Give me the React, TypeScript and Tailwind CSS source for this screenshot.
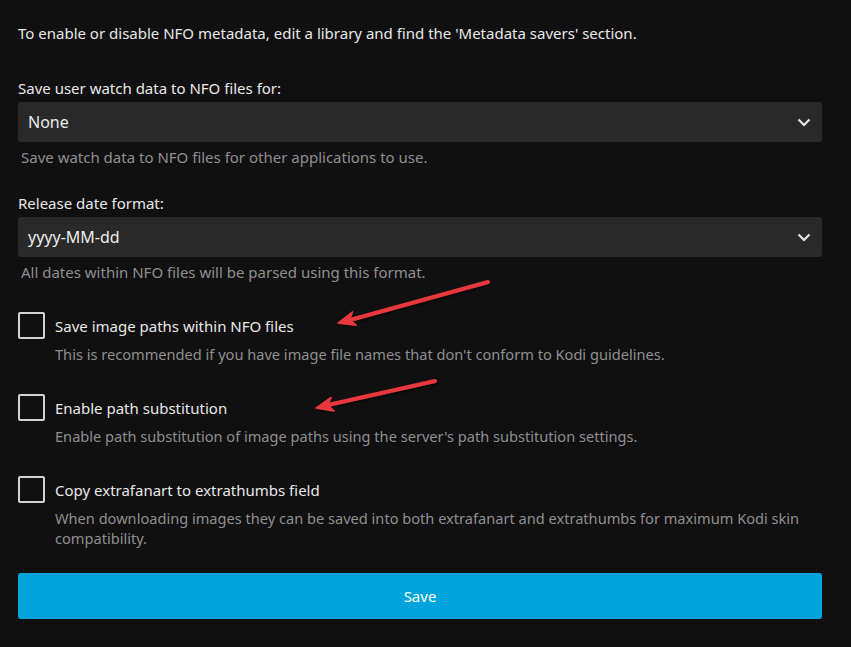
import { ReactNode } from "react";

const FONT = { fontFamily: '"Noto Sans", "Open Sans", sans-serif' };

function Chevron() {
  return (
    <svg width="14" height="9" viewBox="0 0 14 9" className="shrink-0">
      <path d="M1.5 1.5 L7 7 L12.5 1.5" fill="none" stroke="#e6e6e6" strokeWidth="2.2" />
    </svg>
  );
}

function SelectField({ label, value, help }: { label: string; value: string; help: string }) {
  return (
    <div>
      <label className="block text-[15px] leading-[20px] text-[#e8e8e8]">{label}</label>
      <div className="mt-[4px] flex h-[40px] items-center justify-between rounded-[3px] bg-[#292929] pl-[10px] pr-[11px]">
        <span className="text-[16px] text-[#ececec]">{value}</span>
        <Chevron />
      </div>
      <p className="mt-[5px] pl-[3px] text-[15px] leading-[20px] text-[#8f8f8f]">{help}</p>
    </div>
  );
}

function CheckField({ label, children }: { label: string; children: ReactNode }) {
  return (
    <div>
      <div className="flex items-center gap-[10px]">
        <span className="h-[27px] w-[27px] shrink-0 rounded-[2px] border-2 border-[#d2d2d2]" />
        <span className="text-[15px] leading-[20px] text-[#e8e8e8]">{label}</span>
      </div>
      <p className="mt-[5px] pl-[37px] pr-[4px] text-[14.6px] leading-[20px] text-[#8f8f8f]">{children}</p>
    </div>
  );
}

function Arrows() {
  return (
    <svg className="pointer-events-none absolute left-0 top-0" width="851" height="647" viewBox="0 0 851 647">
      <defs>
        <filter id="sh" x="-20%" y="-50%" width="140%" height="200%">
          <feDropShadow dx="1" dy="1.5" stdDeviation="1.2" floodColor="#000" floodOpacity="0.7" />
        </filter>
      </defs>
      <g filter="url(#sh)" fill="#e8393d" stroke="#e8393d">
        <line x1="488" y1="282" x2="350" y2="320" strokeWidth="4" strokeLinecap="round" />
        <polygon points="338,323 352.6,311.8 349.6,319.8 356.3,325.3" strokeWidth="1.5" strokeLinejoin="round" />
        <line x1="435" y1="381" x2="328" y2="405" strokeWidth="4" strokeLinecap="round" />
        <polygon points="316,408 331,397.4 327.7,405.3 334.1,411" strokeWidth="1.5" strokeLinejoin="round" />
      </g>
    </svg>
  );
}

export default function App() {
  return (
    <div className="relative h-[647px] w-[851px] overflow-hidden bg-[#101010]" style={FONT}>
      <div className="w-[822px] pl-[18px] pt-[23px]">
        <p className="text-[15px] leading-[20px] text-[#e8e8e8]">
          To enable or disable NFO metadata, edit a library and find the 'Metadata savers' section.
        </p>

        <div className="mt-[35px]">
          <SelectField
            label="Save user watch data to NFO files for:"
            value="None"
            help="Save watch data to NFO files for other applications to use."
          />
        </div>

        <div className="mt-[26px]">
          <SelectField
            label="Release date format:"
            value="yyyy-MM-dd"
            help="All dates within NFO files will be parsed using this format."
          />
        </div>

        <div className="mt-[30px] flex flex-col gap-[30px]">
          <CheckField label="Save image paths within NFO files">
            This is recommended if you have image file names that don't conform to Kodi guidelines.
          </CheckField>
          <CheckField label="Enable path substitution">
            Enable path substitution of image paths using the server's path substitution settings.
          </CheckField>
          <CheckField label="Copy extrafanart to extrathumbs field">
            When downloading images they can be saved into both extrafanart and extrathumbs for maximum Kodi skin
            compatibility.
          </CheckField>
        </div>

        <button
          type="button"
          className="mt-[25px] flex h-[46px] w-full items-center justify-center rounded-[3px] bg-[#00a4dc] text-[15px] text-white"
        >
          Save
        </button>
      </div>
      <Arrows />
    </div>
  );
}
